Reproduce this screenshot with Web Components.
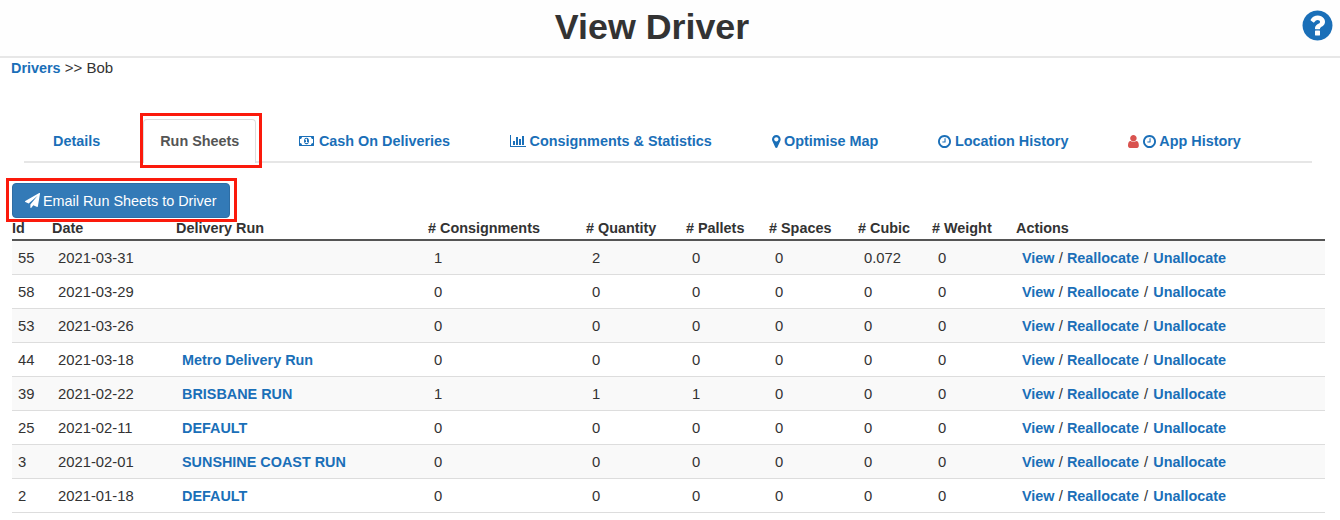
<!DOCTYPE html>
<html>
<head>
<meta charset="utf-8">
<title>View Driver</title>
<style>
  html, body { margin: 0; padding: 0; background: #fff; }
  body { font-family: "Liberation Sans", Arial, sans-serif; font-size: 15px; color: #333; width: 1340px; height: 520px; overflow: hidden; }
</style>
</head>
<body>
<view-driver-page></view-driver-page>

<script>
const ICONS = {
  plane: ['0 0 1792 1792', 'M1764 11q33 24 27 64l-256 1536q-5 29-32 45-14 8-31 8-11 0-24-5l-453-185-242 295q-18 23-49 23-13 0-22-4-19-7-30.500-23.500t-11.500-36.500v-349l864-1059-1069 925-395-162q-37-14-40-55-2-40 32-59l1664-960q15-9 32-9 20 0 36 11z'],
  help: ['0 0 1792 1792', 'M1024 1376v-192q0-14-9-23t-23-9h-192q-14 0-23 9t-9 23v192q0 14 9 23t23 9h192q14 0 23-9t9-23zm256-672q0-88-55.500-163t-138.500-116-170-41q-243 0-371 213-15 24 8 42l132 100q7 6 19 6 16 0 25-12 53-68 86-92 34-24 86-24 48 0 85.500 26t37.500 59q0 38-20 61t-68 45q-63 28-115.500 86.500t-52.500 125.500v36q0 14 9 23t23 9h192q14 0 23-9t9-23q0-19 21.500-49.500t54.500-49.500q32-18 49-28.500t46-35 44.500-48 28-60.500 12.500-81zm384 192q0 209-103 385.500t-279.500 279.500-385.500 103-385.500-103-279.500-279.500-103-385.500 103-385.500 279.500-279.500 385.500-103 385.500 103 279.500 279.500 103 385.500z'],
  marker: ['384 128 1024 1536', 'M1152 640q0-106-75-181t-181-75-181 75-75 181 75 181 181 75 181-75 75-181zm256 0q0 109-33 179l-364 774q-16 33-47.500 52t-67.500 19-67.500-19-46.500-52l-365-774q-33-70-33-179 0-212 150-362t362-150 362 150 150 362z'],
  clock: ['128 128 1536 1536', 'M1024 544v448q0 14-9 23t-23 9h-320q-14 0-23-9t-9-23v-64q0-14 9-23t23-9h224v-352q0-14 9-23t23-9h64q14 0 23 9t9 23zm416 352q0-148-73-273t-198-198-273-73-273 73-198 198-73 273 73 273 198 198 273 73 273-73 198-198 73-273zm224 0q0 209-103 385.500t-279.500 279.500-385.500 103-385.500-103-279.500-279.500-103-385.500 103-385.500 279.500-279.500 385.500-103 385.500 103 279.500 279.500 103 385.500z'],
  user: ['256 128 1280 1536', 'M1536 1399q0 109-62.500 187t-150.500 78h-854q-88 0-150.500-78t-62.500-187q0-85 8.500-160.500t31.500-152 58.500-131 94-89 134.500-34.500q131 128 313 128t313-128q76 0 134.500 34.500t94 89 58.500 131 31.500 152 8.500 160.500zm-256-887q0 159-112.500 271.500t-271.500 112.500-271.500-112.500-112.500-271.500 112.500-271.500 271.500-112.500 271.500 112.500 112.500 271.500z'],
  chart: ['0 128 2048 1536', 'M640 896v512h-256v-512h256zm384-512v1024h-256v-1024h256zm1024 1152v128h-2048v-1536h128v1408h1920zm-640-896v768h-256v-768h256zm384-384v1152h-256v-1152h256z'],
  money: ['0 256 2048 1280', 'M768 1152h384v-96h-128v-448h-114l-148 137 77 80q42-37 55-57h2v288h-128v96zm512-256q0 70-21 142t-59.500 134-101.500 101-138 39-138-39-101.500-101-59.500-134-21-142 21-142 59.500-134 101.500-101 138-39 138 39 101.500 101 59.500 134 21 142zm512 256v-512q-106 0-181-75t-75-181h-1152q0 106-75 181t-181 75v512q106 0 181 75t75 181h1152q0-106 75-181t181-75zm128-832v1152q0 26-19 45t-45 19h-1792q-26 0-45-19t-19-45v-1152q0-26 19-45t45-19h1792q26 0 45 19t19 45z']
};

class FaIcon extends HTMLElement {
  connectedCallback() {
    const [box, d] = ICONS[this.getAttribute('name')];
    const h = this.getAttribute('h') || 13;
    const [, , bw, bh] = box.split(' ').map(Number);
    const w = h * bw / bh;
    this.attachShadow({ mode: 'open' }).innerHTML = `
      <style>:host { display: inline-flex; vertical-align: middle; } svg { display: block; fill: currentColor; }</style>
      <svg viewBox="${box}" width="${w}" height="${h}"><path d="${d}"/></svg>`;
  }
}
customElements.define('fa-icon', FaIcon);

class PageHeader extends HTMLElement {
  constructor() {
    super();
    this.attachShadow({ mode: 'open' }).innerHTML = `
      <style>
        :host { display: flex; align-items: center; justify-content: center; position: relative; height: 56px; background: #fefefe; border-bottom: 2px solid #e7e7e7; }
        h1 { margin: 0; font: bold 35.8px/56px "Liberation Sans", Arial, sans-serif; color: #333; position: relative; left: -18px; top: -1px; }
        a { position: absolute; right: 5px; top: 8px; color: #1a6fb8; display: flex; }
      </style>
      <h1><slot></slot></h1>
      <a><fa-icon name="help" h="35"></fa-icon></a>`;
  }
}
customElements.define('page-header', PageHeader);

class BreadCrumb extends HTMLElement {
  constructor() {
    super();
    this.attachShadow({ mode: 'open' }).innerHTML = `
      <style>
        :host { display: block; padding-left: 11px; line-height: 20px; font-size: 15px; color: #333; }
        b { color: #1a6fb8; font-size: 14.4px; }
      </style>
      <b>Drivers</b> &gt;&gt; Bob`;
  }
}
customElements.define('bread-crumb', BreadCrumb);

class TabBar extends HTMLElement {
  constructor() {
    super();
    this.attachShadow({ mode: 'open' }).innerHTML = `
      <style>
        :host { display: flex; gap: 28px; margin: 41px 28px 0 24px; padding-left: 13px; height: 42px; border-bottom: 2px solid #e6e6e6; }
      </style>
      <slot></slot>`;
  }
}
customElements.define('tab-bar', TabBar);

class TabItem extends HTMLElement {
  constructor() {
    super();
    this.attachShadow({ mode: 'open' }).innerHTML = `
      <style>
        :host { display: flex; align-items: center; gap: 3.5px; padding: 0 16px 1px; height: 44px; box-sizing: border-box; font-weight: bold; font-size: 14.4px; color: #1a6fb8; white-space: nowrap; border: 1px solid transparent; border-bottom: 0; border-radius: 4px 4px 0 0; margin: 0 -1px; }
        :host([active]) { color: #555; background: #fff; border-color: #ddd; }
      </style>
      <slot></slot>`;
  }
}
customElements.define('tab-item', TabItem);

class ActionButton extends HTMLElement {
  constructor() {
    super();
    this.attachShadow({ mode: 'open' }).innerHTML = `
      <style>
        :host { display: inline-flex; align-items: center; gap: 3px; height: 35px; box-sizing: border-box; padding: 0 12px; background: #337ab7; border: 1px solid #2e6da4; border-radius: 4px; color: #fff; font-size: 14.4px; white-space: nowrap; }
      </style>
      <fa-icon name="plane" h="15"></fa-icon><slot></slot>`;
  }
}
customElements.define('action-button', ActionButton);

const RUNS = [
  [55, '2021-03-31', '', 1, 2, 0, 0, '0.072', 0],
  [58, '2021-03-29', '', 0, 0, 0, 0, 0, 0],
  [53, '2021-03-26', '', 0, 0, 0, 0, 0, 0],
  [44, '2021-03-18', 'Metro Delivery Run', 0, 0, 0, 0, 0, 0],
  [39, '2021-02-22', 'BRISBANE RUN', 1, 1, 1, 0, 0, 0],
  [25, '2021-02-11', 'DEFAULT', 0, 0, 0, 0, 0, 0],
  [3, '2021-02-01', 'SUNSHINE COAST RUN', 0, 0, 0, 0, 0, 0],
  [2, '2021-01-18', 'DEFAULT', 0, 0, 0, 0, 0, 0]
];

class RunSheetTable extends HTMLElement {
  constructor() {
    super();
    const cols = [
      ['Id', 40], ['Date', 124], ['Delivery Run', 252], ['# Consignments', 158], ['# Quantity', 100],
      ['# Pallets', 83], ['# Spaces', 89], ['# Cubic', 74], ['# Weight', 84], ['Actions', 309]
    ];
    const rows = RUNS.map(r => `<tr>
      <td>${r[0]}</td><td>${r[1]}</td><td><b>${r[2]}</b></td>
      ${r.slice(3).map(v => `<td>${v}</td>`).join('')}
      <td><b>View</b> / <b>Reallocate</b> <span>/</span> <b>Unallocate</b></td>
    </tr>`).join('');
    this.attachShadow({ mode: 'open' }).innerHTML = `
      <style>
        :host { display: block; margin: 0 15px 0 12px; }
        table { border-collapse: collapse; table-layout: fixed; width: 1313px; font-size: 14.8px; }
        th { text-align: left; padding: 0; height: 21px; line-height: 21px; border-bottom: 2px solid #555; color: #333; white-space: nowrap; font-size: 14.4px; }
        td { padding: 0 0 0 6px; height: 33px; border-bottom: 1px solid #ddd; white-space: nowrap; color: #333; }
        tr:nth-child(odd) td { background: #f9f9f9; }
        b { color: #1a6fb8; font-size: 14.4px; }
        span { margin: 0 1px; }
      </style>
      <table>
        <colgroup>${cols.map(c => `<col style="width:${c[1]}px">`).join('')}</colgroup>
        <thead><tr>${cols.map(c => `<th>${c[0]}</th>`).join('')}</tr></thead>
        <tbody>${rows}</tbody>
      </table>`;
  }
}
customElements.define('run-sheet-table', RunSheetTable);

class RedBox extends HTMLElement {
  constructor() {
    super();
    this.attachShadow({ mode: 'open' }).innerHTML = `
      <style>:host { position: absolute; box-sizing: border-box; border: 3px solid #fb1a0c; pointer-events: none; }</style>`;
  }
}
customElements.define('red-box', RedBox);

class ViewDriverPage extends HTMLElement {
  constructor() {
    super();
    this.attachShadow({ mode: 'open' }).innerHTML = `
      <style>
        :host { display: block; position: relative; height: 520px; overflow: hidden; }
        .toolbar { padding: 20px 0 0 12px; height: 35px; display: flex; }
        .red { color: #d9534f; }
      </style>
      <page-header>View Driver</page-header>
      <bread-crumb></bread-crumb>
      <tab-bar>
        <tab-item>Details</tab-item>
        <tab-item active>Run Sheets</tab-item>
        <tab-item><fa-icon name="money" h="10"></fa-icon>Cash On Deliveries</tab-item>
        <tab-item><fa-icon name="chart" h="12"></fa-icon>Consignments &amp; Statistics</tab-item>
        <tab-item><fa-icon name="marker" h="13"></fa-icon>Optimise Map</tab-item>
        <tab-item><fa-icon name="clock" h="13"></fa-icon>Location History</tab-item>
        <tab-item><fa-icon class="red" name="user" h="13"></fa-icon><fa-icon name="clock" h="13"></fa-icon>App History</tab-item>
      </tab-bar>
      <div class="toolbar"><action-button>Email Run Sheets to Driver</action-button></div>
      <run-sheet-table></run-sheet-table>
      <red-box style="left:140px;top:113px;width:122px;height:55px"></red-box>
      <red-box style="left:6px;top:178px;width:231px;height:44px"></red-box>`;
  }
}
customElements.define('view-driver-page', ViewDriverPage);
</script>
</body>
</html>
